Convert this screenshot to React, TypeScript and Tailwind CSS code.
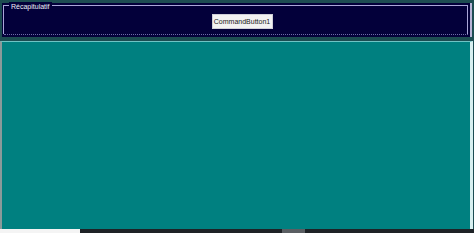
import React from "react";

export default function App() {
  return (
    <div className="w-[474px] h-[233px] bg-[#1d4d52] flex flex-col overflow-hidden" style={{ fontFamily: '"Liberation Sans", Arial, sans-serif' }}>
      <div className="h-[3px]" />
      <div className="mx-[2px] h-[34px] bg-[#03003a] relative border-r-2 border-r-[#b8b4d6]">
        <div className="absolute left-[1px] right-[2px] top-[2px] bottom-[3px] border border-[#aaa6d8] border-b-0" />
        <div className="absolute left-[2px] right-[2px] bottom-[2px] border-b border-dotted border-[#6e6aa8]" />
        <div className="absolute left-[7px] top-[-1px] px-[2px] bg-[#03003a] text-[7px] leading-[9px] text-[#f0f0f8]">Récapitulatif</div>
        <div className="flex justify-center pt-[11px] pl-[12px]">
          <div className="w-[61px] h-[15px] bg-[#f2f2f2] border border-[#cfcfd8] text-[7px] leading-[13px] text-[#1a1a1a] text-center">CommandButton1</div>
        </div>
      </div>
      <div className="h-[4px]" />
      <div className="flex-1 bg-[#008080] border-t border-t-[#6fc4c4] border-l-2 border-l-[#8a9a9a] border-r-[3px] border-r-[#d8f0f0] mr-[1px]" />
      <div className="h-[4px] flex">
        <div className="w-[80px] bg-[#f4f4f4]" />
        <div className="w-[202px] bg-[#1e2226]" />
        <div className="w-[23px] bg-[#5a5e62]" />
        <div className="flex-1 bg-[#1e2226]" />
      </div>
    </div>
  );
}
